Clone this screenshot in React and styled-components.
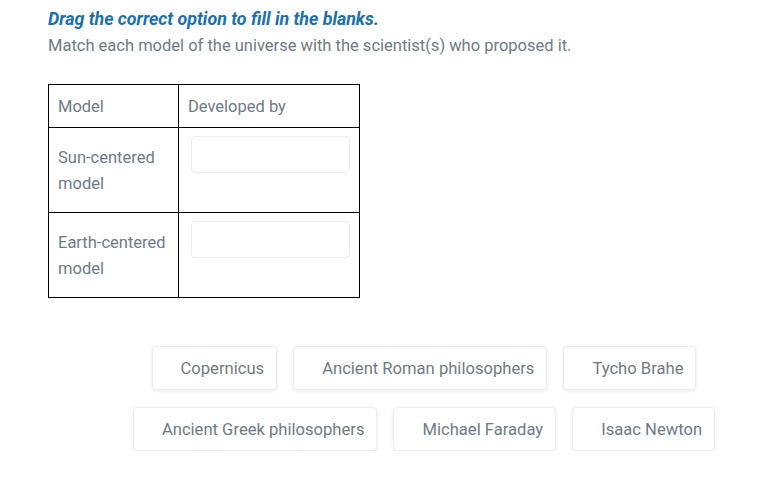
import React from "react";
import styled, { createGlobalStyle } from "styled-components";

const Global = createGlobalStyle`
  html, body { margin: 0; padding: 0; background: #fff; }
  body { font-family: Roboto, "Open Sans", sans-serif; }
`;

const Page = styled.div`
  padding: 8px 0 0 48px;
  width: 724px;
`;

const Title = styled.div`
  font-weight: 700;
  font-style: italic;
  font-size: 17.8px;
  line-height: 22px;
  color: #1a6fae;
`;

const Prompt = styled.div`
  font-size: 16.5px;
  line-height: 24px;
  color: #6f7b84;
  margin-top: 4px;
`;

const Table = styled.table`
  border-collapse: collapse;
  margin-top: 26px;
  width: 312px;
  color: #6f7b84;
  font-size: 16.5px;
`;

const Th = styled.th`
  border: 1px solid #000;
  text-align: left;
  font-weight: 400;
  height: 43px;
  padding: 0 9px;
  width: ${(p) => p.$w}px;
  box-sizing: border-box;
`;

const Td = styled.td`
  border: 1px solid #000;
  vertical-align: top;
  height: 85px;
  padding: 17px 9px 0 9px;
  line-height: 26px;
  box-sizing: border-box;
`;

const Drop = styled.div`
  height: 37px;
  width: 159px;
  margin: -9px 0 0 3px;
  border: 1px solid #ececec;
  border-radius: 4px;
  box-sizing: border-box;
`;

const Bank = styled.div`
  display: flex;
  flex-wrap: wrap;
  justify-content: center;
  gap: 17px 16px;
  width: 696px;
  margin: 48px 0 0 28px;
`;

const Chip = styled.div`
  height: 44px;
  box-sizing: border-box;
  padding: 0 12px 0 28px;
  display: flex;
  align-items: center;
  border: 1px solid #ececec;
  border-radius: 4px;
  box-shadow: 0 1px 4px rgba(0, 0, 0, 0.08);
  background: #fff;
  color: #6f7b84;
  font-size: 16.6px;
  white-space: nowrap;
`;

const Row = styled.div`
  display: flex;
  justify-content: center;
  gap: 16px;
  width: 100%;
`;

const rows = [
  ["Copernicus", "Ancient Roman philosophers", "Tycho Brahe"],
  ["Ancient Greek philosophers", "Michael Faraday", "Isaac Newton"],
];

export default function App() {
  return (
    <>
      <Global />
      <Page>
        <Title>Drag the correct option to fill in the blanks.</Title>
        <Prompt>Match each model of the universe with the scientist(s) who proposed it.</Prompt>
        <Table>
          <thead>
            <tr>
              <Th $w={131}>Model</Th>
              <Th $w={181}>Developed by</Th>
            </tr>
          </thead>
          <tbody>
            <tr>
              <Td>Sun-centered<br />model</Td>
              <Td><Drop /></Td>
            </tr>
            <tr>
              <Td>Earth-centered<br />model</Td>
              <Td><Drop /></Td>
            </tr>
          </tbody>
        </Table>
        <Bank>
          {rows.map((r, i) => (
            <Row key={i}>
              {r.map((c) => (
                <Chip key={c}>{c}</Chip>
              ))}
            </Row>
          ))}
        </Bank>
      </Page>
    </>
  );
}
